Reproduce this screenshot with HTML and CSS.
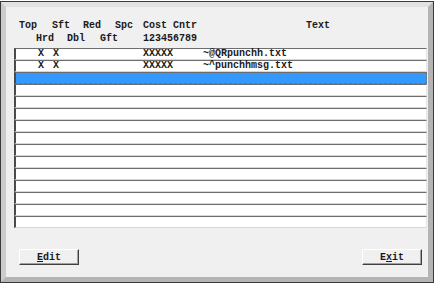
FILE: index.html
```html
<!DOCTYPE html>
<html lang="en">
<head>
    <meta charset="UTF-8">
    <title>Message Setup</title>
    <link rel="stylesheet" href="styles.css">
</head>
<body>

    <!-- Dialog window -->
    <div class="window">
        <div class="frame">

            <!-- Column headers -->
            <div class="head">
                <div class="head-line">
                    <span class="h-top">Top</span>
                    <span class="h-sft">Sft</span>
                    <span class="h-red">Red</span>
                    <span class="h-spc">Spc</span>
                    <span class="h-cost">Cost Cntr</span>
                    <span class="h-text">Text</span>
                </div>
                <div class="head-line line2">
                    <span class="h-hrd">Hrd</span>
                    <span class="h-dbl">Dbl</span>
                    <span class="h-gft">Gft</span>
                    <span class="h-num">123456789</span>
                </div>
            </div>

            <!-- Rows -->
            <div class="list">
                <div class="row"><span class="c-hrd">X</span><span class="c-sft">X</span><span class="c-cost">XXXXX</span><span class="c-text">~@QRpunchh.txt</span></div>
                <div class="row"><span class="c-hrd">X</span><span class="c-sft">X</span><span class="c-cost">XXXXX</span><span class="c-text">~^punchhmsg.txt</span></div>
                <div class="row selected"></div>
                <div class="row"></div>
                <div class="row"></div>
                <div class="row"></div>
                <div class="row"></div>
                <div class="row"></div>
                <div class="row"></div>
                <div class="row"></div>
                <div class="row"></div>
                <div class="row"></div>
                <div class="row"></div>
                <div class="row"></div>
                <div class="row"></div>
            </div>

            <!-- Buttons -->
            <div class="buttons">
                <button class="btn"><u>E</u>dit</button>
                <button class="btn">E<u>x</u>it</button>
            </div>

        </div>
    </div>

</body>
</html>
```

FILE: styles.css
```css
* {
    margin: 0;
    padding: 0;
    box-sizing: border-box;
}

body {
    font-family: 'Liberation Mono', monospace;
    font-size: 10px;
    font-weight: bold;
    background-color: #ffffff;
    color: #1a1a1a;
}

/* Window frame */
.window {
    width: 434px;
    height: 282px;
    margin-top: 1px;
    border: 1px solid #3a3a3a;
}

.frame {
    height: 100%;
    border-style: solid;
    border-width: 5px;
    border-color: #e2e2e2 #b4b4b4 #b4b4b4 #cccccc;
    background-color: #f0f0f0;
}

/* Headers */
.head {
    padding-top: 12px;
}

.head-line {
    display: flex;
    height: 13px;
    line-height: 13px;
    padding-left: 13px;
}

.head-line span {
    flex: none;
}

.head-line.line2 {
    padding-left: 30px;
}

.h-top { width: 33px; }
.h-sft { width: 31px; }
.h-red { width: 32px; }
.h-spc { width: 28px; }
.h-cost { width: 163px; }

.h-hrd { width: 31px; }
.h-dbl { width: 33px; }
.h-gft { width: 43px; }

/* List */
.list {
    margin: 3px 1px 0 8px;
}

.row {
    display: flex;
    height: 12px;
    line-height: 10px;
    padding-left: 22px;
    background-color: #ffffff;
    border-top: 1px solid #6e6e6e;
    border-left: 2px solid #4a4a4a;
    border-bottom: 1px solid #d6d6d6;
    border-right: 1px solid #e6e6e6;
}

.row span {
    flex: none;
}

.row.selected {
    background-color: #3399ff;
    border-bottom: 1px dashed #707070;
    border-right: 1px dashed #707070;
}

.c-hrd { width: 15px; }
.c-sft { width: 90px; }
.c-cost { width: 60px; }

/* Buttons */
.buttons {
    display: flex;
    justify-content: space-between;
    margin-top: 21px;
    padding: 0 6px 0 13px;
}

.btn {
    width: 60px;
    height: 16px;
    font-family: 'Liberation Mono', monospace;
    font-size: 10px;
    font-weight: bold;
    color: #1a1a1a;
    background-color: #f0f0f0;
    border-style: solid;
    border-width: 1px;
    border-color: #ffffff #404040 #404040 #ffffff;
    box-shadow: inset -1px -1px 0 #a0a0a0;
}
```
